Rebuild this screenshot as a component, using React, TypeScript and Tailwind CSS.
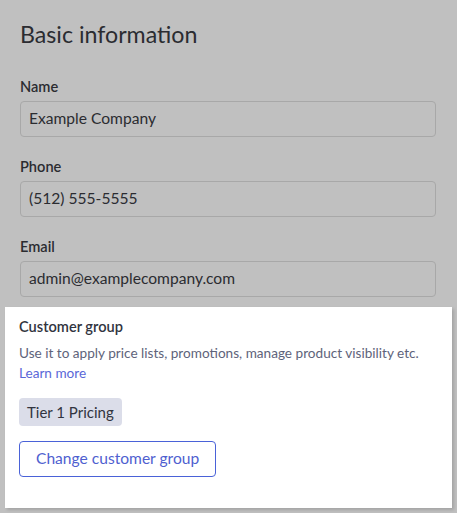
const fields = [
  { label: "Name", value: "Example Company" },
  { label: "Phone", value: "(512) 555-5555" },
  { label: "Email", value: "admin@examplecompany.com" },
];

export default function App() {
  return (
    <div
      className="relative h-[513px] w-[457px] overflow-hidden bg-[#c0c0c0]"
      style={{ fontFamily: "Lato, 'Noto Sans', sans-serif" }}
    >
      <div className="px-5 pt-[18px]">
        <h1 className="text-[23.2px] leading-[32px] text-[#2b2c31]">Basic information</h1>
        <div className="mt-[27px] flex flex-col gap-[20px]">
          {fields.map((f) => (
            <div key={f.label}>
              <div className="text-[14.6px] font-semibold leading-[20px] text-[#2b2c31]">{f.label}</div>
              <div className="mt-[4px] flex h-[36px] w-[416px] items-center rounded-[4px] border border-[#a8a8a8] px-2 text-[15.6px] text-[#2b2c31]">
                {f.value}
              </div>
            </div>
          ))}
        </div>
      </div>

      <div className="absolute left-[5px] top-[307px] h-[201px] w-[447px] bg-white px-[14px] pt-[10px] shadow-[2px_2px_3px_rgba(0,0,0,0.15)]">
        <div className="text-[14.6px] font-semibold leading-[20px] text-[#313440]">Customer group</div>
        <p className="mt-[6px] text-[13.6px] leading-[20px] text-[#5e637a]">
          Use it to apply price lists, promotions, manage product visibility etc.
          <br />
          <a className="text-[#5a67d8]">Learn more</a>
        </p>
        <span className="mt-[15px] inline-flex h-[28px] items-center rounded-[4px] bg-[#dbdde9] px-2 text-[15px] text-[#313440]">
          Tier 1 Pricing
        </span>
        <div className="mt-[15px]">
          <button className="h-[36px] rounded-[4px] border border-[#4a62d8] px-4 text-[15.6px] text-[#4f5fd0]">
            Change customer group
          </button>
        </div>
      </div>
    </div>
  );
}
